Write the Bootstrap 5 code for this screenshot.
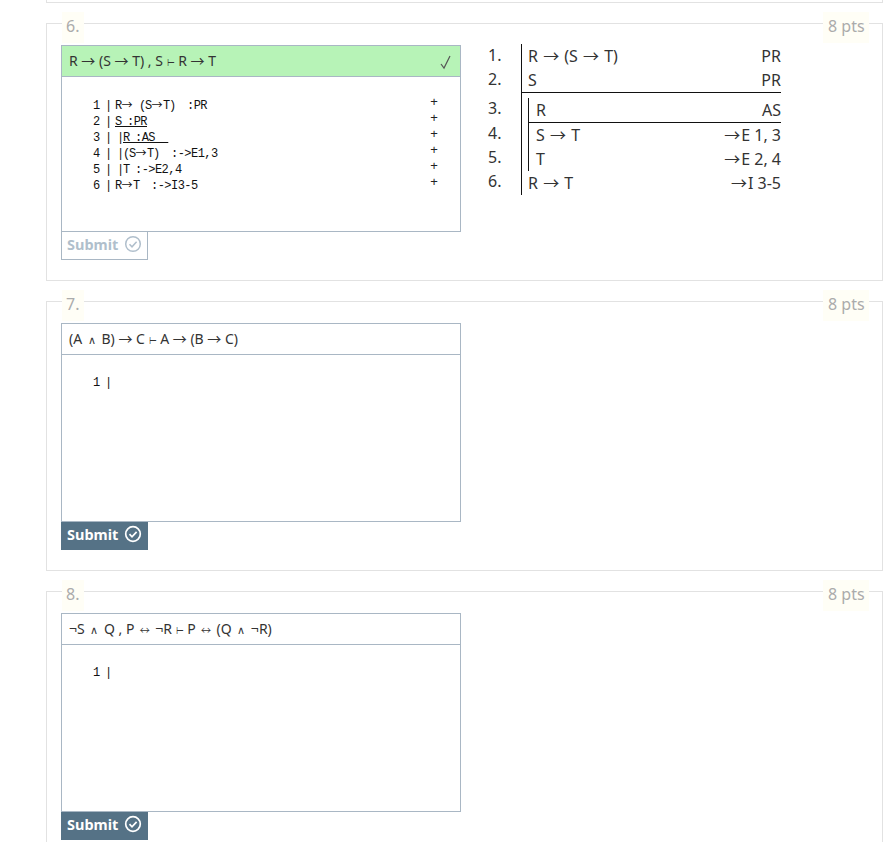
<!DOCTYPE html>
<html lang="en">
<head>
<meta charset="utf-8">
<title>Proofs</title>
<link href="https://cdn.jsdelivr.net/npm/bootstrap@5.3.0/dist/css/bootstrap.min.css" rel="stylesheet">
<style>
html,body{height:842px;overflow:hidden;background:#fff}
body{font-family:"Noto Sans","Open Sans",sans-serif;color:#333;padding:0 6px 0 46px}
.prev-edge{height:3px;border:1px solid #e2e2e2;border-top:0;margin-bottom:20px}
.qbox{position:relative;border:1px solid #e2e2e2;padding:21px 14px 20px;margin-bottom:20px}
.qnum,.qpts{position:absolute;top:-12px;height:31px;background:#fffef6;color:#ababab;font-size:16px;line-height:29px}
.qnum{left:15px;width:22px;padding-left:4px}
.qpts{right:13px;width:46px;padding-left:5px;white-space:nowrap}
.leftcol{width:400px;flex:none}
.panel-box{border:1px solid #a9b7c4}
.panel-head{height:31px;padding:0 7px;font-size:14px;line-height:30px;border-bottom:1px solid #a9b7c4;color:#333;white-space:pre}
.panel-head.good{background:#b7f3b7}
.panel-body-a{height:154px;padding:21px 22px 0 31px}
.panel-body-b{height:166px;padding:20px 22px 0 31px}
.code{font-family:"Liberation Mono",monospace;font-size:12px;line-height:16px;color:#111;letter-spacing:-1.2px}
.cline{height:16px;white-space:pre}
.gut{display:inline-block;width:22px}
.plus{font-family:"Liberation Sans",sans-serif;font-size:13px;line-height:16px;margin-top:-4px;text-align:center;width:8px;color:#222}
.arr{display:inline-block;width:12px;text-align:center;font-family:"Noto Sans CJK SC",sans-serif;font-size:11px;line-height:12px;letter-spacing:0}
.bar{display:inline-block;width:8px;text-align:right}
.tl{letter-spacing:-.55px}
.u{text-decoration:underline}
.sy{font-family:"Noto Sans CJK SC",sans-serif;line-height:1}
.ftc .sy{margin:0 1px}
.sm{font-size:.75em}
.sy.sm{margin:0 1.5px}
.wedge{font-size:.75em;margin:0 2px}
.tee{font-size:.65em}
.sub-btn{width:87px;height:28px;padding:0 0 4px 6px;border:0;border-radius:0;background:#557286;color:#fff;font-weight:700;font-size:14.5px;line-height:22px;display:flex;align-items:center;gap:6px}
.sub-btn.off{background:#fff;border:1px solid #a9b7c4;border-top:0;color:#b0bfcc;padding-left:5px}
.proof{margin:-1px 0 0 27px;font-size:16px;color:#333}
.nums{width:33px;margin-top:-1px}
.nums div{height:24px;line-height:24px}
.nums .g3{margin-top:5px}
.nums .g4{margin-top:1px}
.ftc{width:260px;border-left:1px solid #111}
.pr{height:24px;line-height:24px;padding-left:6px;display:flex;justify-content:space-between}
.pr.rule{border-bottom:1px solid #111;height:25px}
.inner{margin:5px 0 0 6px;border-left:1px solid #111}
.inner .pr{padding-left:7px}
</style>
</head>
<body>
<div class="prev-edge"></div>

<div class="qbox" style="height:258px">
  <div class="qnum">6.</div><div class="qpts">8 pts</div>
  <div class="d-flex">
    <div class="leftcol">
      <div class="panel-box">
        <div class="panel-head good d-flex justify-content-between"><span>R <span class="sy">→</span> (S <span class="sy">→</span> T) , S <span class="tee">⊢</span> R <span class="sy">→</span> T</span><svg width="14" height="30" viewBox="0 0 14 30"><path d="M2 18l3 4L11 10" fill="none" stroke="#555" stroke-width="1.2"/></svg></div>
        <div class="panel-body-a d-flex justify-content-between">
          <div class="code">
            <div class="cline"><span class="gut">1 |</span>R<span class="arr">→</span> (S<span class="arr">→</span>T)  <span class="tl">:PR</span></div>
            <div class="cline"><span class="gut">2 |</span><span class="u">S <span class="tl">:PR</span></span></div>
            <div class="cline"><span class="gut">3 |</span><span class="bar">|</span><span class="u">R <span class="tl">:AS  </span></span></div>
            <div class="cline"><span class="gut">4 |</span><span class="bar">|</span>(S<span class="arr">→</span>T)  <span class="tl">:-&gt;E1,3</span></div>
            <div class="cline"><span class="gut">5 |</span><span class="bar">|</span>T <span class="tl">:-&gt;E2,4</span></div>
            <div class="cline"><span class="gut">6 |</span>R<span class="arr">→</span>T  <span class="tl">:-&gt;I3-5</span></div>
          </div>
          <div class="plus"><div>+</div><div>+</div><div>+</div><div>+</div><div>+</div><div>+</div></div>
        </div>
      </div>
      <button class="btn sub-btn off" type="button">Submit <svg width="18" height="18" viewBox="0 0 18 18"><circle cx="9" cy="9" r="7.3" fill="none" stroke="currentColor" stroke-width="1.5"/><path d="M5.5 9.2l2.5 2.6 4.6-5" fill="none" stroke="currentColor" stroke-width="1.5"/></svg></button>
    </div>
    <div class="proof d-flex align-items-start">
      <div class="nums"><div>1.</div><div>2.</div><div class="g3">3.</div><div class="g4">4.</div><div>5.</div><div>6.</div></div>
      <div class="ftc">
        <div class="pr"><span>R <span class="sy">→</span> (S <span class="sy">→</span> T)</span><span>PR</span></div>
        <div class="pr rule"><span>S</span><span>PR</span></div>
        <div class="inner">
          <div class="pr rule"><span>R</span><span>AS</span></div>
          <div class="pr"><span>S <span class="sy">→</span> T</span><span><span class="sy">→</span>E 1, 3</span></div>
          <div class="pr"><span>T</span><span><span class="sy">→</span>E 2, 4</span></div>
        </div>
        <div class="pr"><span>R <span class="sy">→</span> T</span><span><span class="sy">→</span>I 3-5</span></div>
      </div>
    </div>
  </div>
</div>

<div class="qbox" style="height:270px">
  <div class="qnum">7.</div><div class="qpts">8 pts</div>
  <div class="leftcol">
    <div class="panel-box">
      <div class="panel-head">(A <span class="wedge">∧</span> B) <span class="sy">→</span> C <span class="tee">⊢</span> A <span class="sy">→</span> (B <span class="sy">→</span> C)</div>
      <div class="panel-body-b code"><div class="cline"><span class="gut">1 |</span></div></div>
    </div>
    <button class="btn sub-btn" type="button">Submit <svg width="18" height="18" viewBox="0 0 18 18"><circle cx="9" cy="9" r="7.3" fill="none" stroke="currentColor" stroke-width="1.7"/><path d="M5.5 9.2l2.5 2.6 4.6-5" fill="none" stroke="currentColor" stroke-width="1.7"/></svg></button>
  </div>
</div>

<div class="qbox" style="height:270px">
  <div class="qnum">8.</div><div class="qpts">8 pts</div>
  <div class="leftcol">
    <div class="panel-box">
      <div class="panel-head">¬S <span class="wedge">∧</span> Q , P <span class="sy sm">↔</span> ¬R <span class="tee">⊢</span> P <span class="sy sm">↔</span> (Q <span class="wedge">∧</span> ¬R)</div>
      <div class="panel-body-b code"><div class="cline"><span class="gut">1 |</span></div></div>
    </div>
    <button class="btn sub-btn" type="button">Submit <svg width="18" height="18" viewBox="0 0 18 18"><circle cx="9" cy="9" r="7.3" fill="none" stroke="currentColor" stroke-width="1.7"/><path d="M5.5 9.2l2.5 2.6 4.6-5" fill="none" stroke="currentColor" stroke-width="1.7"/></svg></button>
  </div>
</div>
<script src="https://cdn.jsdelivr.net/npm/bootstrap@5.3.0/dist/js/bootstrap.bundle.min.js"></script>
</body>
</html>
